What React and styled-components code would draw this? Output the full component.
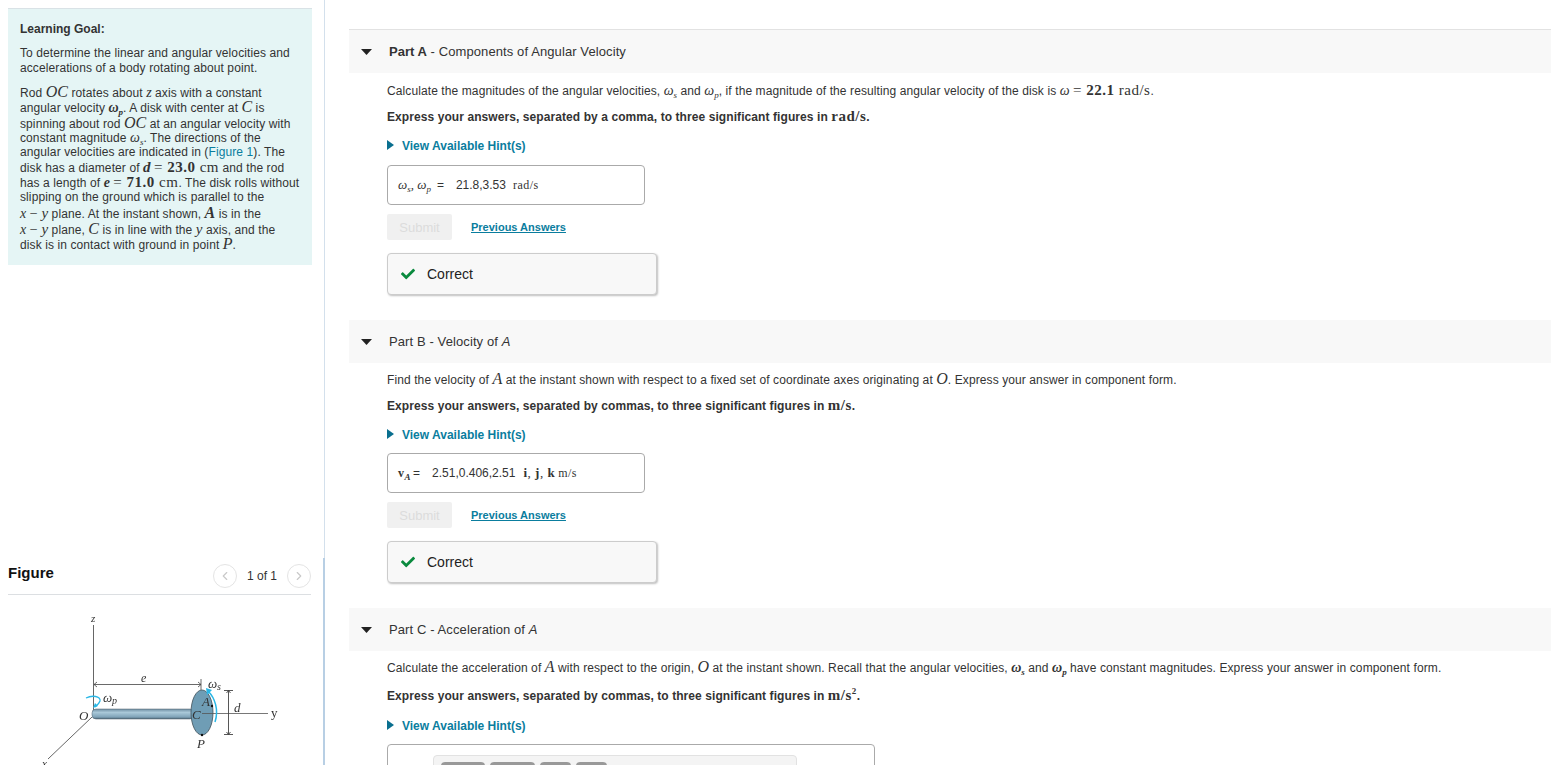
import React from 'react';
import styled, {createGlobalStyle} from 'styled-components';
import {FaCheck} from 'react-icons/fa';
import {ChevronLeft, ChevronRight} from 'lucide-react';

const Global = createGlobalStyle`
    html, body {
        margin: 0;
        padding: 0;
        height: 765px;
        overflow: hidden;
        background: #fff;
    }
    body {
        font-family: "Liberation Sans", Arial, sans-serif;
        font-size: 12px;
        color: #333;
    }
`
const Page = styled.div`
    display: flex;
    width: 1551px;
    height: 765px;
    overflow: hidden;
`
const Side = styled.aside`
    width: 325px;
    flex: none;
    display: flex;
    flex-direction: column;
`
const SideTop = styled.div`
    height: 558px;
    padding: 8px 12px 0 8px;
    border-right: 1px solid #d3e0ec;
    box-sizing: border-box;
`
const SideBottom = styled.div`
    flex: 1;
    padding: 0 12px 0 8px;
    border-right: 2px solid #b8cfe4;
    box-sizing: border-box;
    overflow: hidden;
`
const Goal = styled.section`
    background: #e5f5f5;
    border-top: 1px solid #d9e2e6;
    height: 257px;
    box-sizing: border-box;
    padding: 13px 12px 0;
    line-height: 15px;
    letter-spacing: 0.1px;
`
const GoalTitle = styled.div`
    font-weight: bold;
    letter-spacing: 0;
    margin-bottom: 9px;
`
const GoalPara = styled.div`
    margin-bottom: 8px;
`
const Line = styled.span`
    display: block;
    white-space: nowrap;
    height: ${p => p.$h || 15}px;
`
const Math = styled.span`
    font-family: "Liberation Serif", "DejaVu Serif", serif;
    font-style: ${p => p.$up ? 'normal' : 'italic'};
    font-weight: ${p => p.$bold ? 'bold' : 'normal'};
    font-size: ${p => p.$size || 16}px;
    letter-spacing: ${p => p.$up ? 0.5 : 0}px;
    color: #333;
`
const Sub = styled.sub`
    font-size: 9px;
    line-height: 0;
    vertical-align: -3px;
`
const Sup = styled.sup`
    font-size: 9px;
    line-height: 0;
    vertical-align: 6px;
`
const TextLink = styled.span`
    color: #0a7d9e;
`
const FigureHead = styled.div`
    display: flex;
    align-items: center;
    justify-content: space-between;
    height: 36px;
    border-bottom: 1px solid #dcdfe2;
`
const FigureTitle = styled.div`
    font-size: 15px;
    font-weight: bold;
    color: #111;
    margin-top: -7px;
`
const Pager = styled.div`
    display: flex;
    align-items: center;
    gap: 10px;
`
const PagerButton = styled.span`
    width: 24px;
    height: 24px;
    box-sizing: border-box;
    border: 1px solid #e4e4e4;
    border-radius: 50%;
    display: flex;
    align-items: center;
    justify-content: center;
    color: #c9c9c9;
`
const FigureDrawing = styled.svg`
    display: block;
    margin-left: -8px;
    filter: blur(0.35px);
`
const Main = styled.main`
    flex: 1;
    min-width: 0;
    padding: 29px 0 0 24px;
`
const Part = styled.section`
    height: ${p => p.$first ? 291 : 288}px;
`
const PartHead = styled.header`
    height: ${p => p.$first ? 44 : 43}px;
    background: #f8f8f8;
    display: flex;
    align-items: center;
    border-top: ${p => p.$first ? '1px solid #e2e2e2' : 'none'};
    box-sizing: border-box;
    padding-left: 12px;
    font-size: 13px;
`
const Caret = styled.svg`
    width: 11px;
    height: 6px;
    margin-right: 17px;
`
const PartName = styled.span`
    font-weight: ${p => p.$bold ? 'bold' : 'normal'};
    font-size: 13px;
    letter-spacing: ${p => p.$bold ? 0 : 0.1}px;
    white-space: pre;
`
const PartBody = styled.div`
    padding-left: 38px;
`
const Prompt = styled.p`
    margin: 0;
    height: 15px;
    line-height: 15px;
    padding-top: ${p => p.$top || 0}px;
    font-weight: ${p => p.$bold ? 'bold' : 'normal'};
    letter-spacing: ${p => p.$bold ? 0.08 : 0.1}px;
    white-space: nowrap;
`
const Hint = styled.div`
    display: flex;
    align-items: center;
    gap: 8px;
    height: 15px;
    margin-top: ${p => p.$top || 14}px;
    color: #0a7d9e;
    font-weight: bold;
`
const HintArrow = styled.svg`
    width: 7px;
    height: 10px;
    margin-top: -2px;
`
const AnswerBox = styled.div`
    width: 258px;
    height: 40px;
    margin-top: ${p => p.$top || 12}px;
    border: 1px solid #aaa;
    border-radius: 4px;
    box-sizing: border-box;
    display: flex;
    align-items: center;
    padding-left: 10px;
    font-size: 12px;
    white-space: pre;
`
const AnswerValue = styled.span`
    margin: 0 ${p => p.$after || 0}px 0 ${p => p.$before || 0}px;
`
const Actions = styled.div`
    display: flex;
    align-items: center;
    gap: 19px;
    margin-top: 9px;
`
const SubmitButton = styled.button`
    width: 65px;
    height: 26px;
    background: #f0f0f0;
    border: none;
    border-radius: 2px;
    color: #dcdcdc;
    font-family: inherit;
    font-size: 13px;
    padding: 0;
`
const AnswersLink = styled.span`
    color: #0a7d9e;
    font-weight: bold;
    font-size: 11px;
    text-decoration: underline;
`
const Correct = styled.div`
    width: 270px;
    height: 42px;
    margin-top: 13px;
    box-sizing: border-box;
    display: flex;
    align-items: center;
    gap: 12px;
    padding-left: 13px;
    background: #f8f8f8;
    border: 1px solid #ccc;
    border-radius: 4px;
    box-shadow: 1px 1px 2px rgba(0, 0, 0, 0.25);
    font-size: 14px;
    color: #222;
`
const EditorBox = styled.div`
    width: 488px;
    height: 60px;
    margin-top: 11px;
    box-sizing: border-box;
    border: 1px solid #aaa;
    border-radius: 4px;
    padding: 10px 0 0 45px;
`
const Toolbar = styled.div`
    width: 364px;
    height: 40px;
    box-sizing: border-box;
    background: #f4f4f4;
    border: 1px solid #e2e2e2;
    border-radius: 4px;
    display: flex;
    gap: 5px;
    padding: 6px 0 0 7px;
`
const ToolButton = styled.span`
    width: ${p => p.$w}px;
    height: 24px;
    background: #999;
    border-radius: 4px;
`

function Caption({x, y, size = 13, italic = true, children}) {
    return (
        <text x={x} y={y} fontFamily="Liberation Serif" fontStyle={italic ? 'italic' : 'normal'} fontSize={size} fill="#333">
            {children}
        </text>
    )
}

function Diagram() {
    return (
        <FigureDrawing width="300" height="170" viewBox="0 595 300 170">
            <defs>
                <linearGradient id="rod" x1="0" y1="0" x2="0" y2="1">
                    <stop offset="0" stopColor="#6f8fa3" />
                    <stop offset="0.35" stopColor="#a9c8d8" />
                    <stop offset="0.8" stopColor="#7fa3b8" />
                    <stop offset="1" stopColor="#4d6675" />
                </linearGradient>
            </defs>
            <path d="M93.5 625V714M92 717L48 759" stroke="#555" strokeWidth="0.9" fill="none" />
            <path d="M94 684.5H201M201 679V690M97 682L94 684.5L97 687M198 682L201 684.5L198 687" stroke="#444" strokeWidth="0.8" fill="none" />
            <rect x="92" y="709" width="102" height="10" rx="4" fill="url(#rod)" stroke="#4c5f6b" strokeWidth="0.5" />
            <ellipse cx="202" cy="712.5" rx="11" ry="22.5" fill="#6f9db5" stroke="#3f4f58" strokeWidth="0.8" />
            <path d="M202 713.5H268" stroke="#555" strokeWidth="0.8" fill="none" />
            <path d="M224 690.5H233M228.5 690.5V734M224 734.5H233M226.5 693L228.5 690.5L230.5 693M226.5 732L228.5 734.5L230.5 732" stroke="#444" strokeWidth="0.9" fill="none" />
            <path d="M208 691C215 698 219 710 215 722" stroke="#29b7e6" strokeWidth="1.5" fill="none" />
            <path d="M206 688L212 690L207 695Z" fill="#29b7e6" />
            <path d="M86 698C92 695 101 696 100 701C99 704 96 706 95 707" stroke="#29b7e6" strokeWidth="1.3" fill="none" />
            <path d="M93 708L95 703L98 706Z" fill="#29b7e6" />
            <circle cx="212" cy="706" r="1.2" fill="#111" />
            <circle cx="202" cy="735" r="1.2" fill="#111" />
            <Caption x={91} y={622} size={11}>z</Caption>
            <Caption x={141} y={682} size={12}>e</Caption>
            <Caption x={103} y={702} size={13}>ω</Caption>
            <Caption x={112} y={704} size={10}>p</Caption>
            <Caption x={208} y={688} size={13}>ω</Caption>
            <Caption x={217} y={690} size={10}>s</Caption>
            <Caption x={79} y={720}>O</Caption>
            <Caption x={192} y={719}>C</Caption>
            <Caption x={202} y={706}>A</Caption>
            <Caption x={197} y={748}>P</Caption>
            <Caption x={234} y={712}>d</Caption>
            <Caption x={271} y={717} size={13} italic={false}>y</Caption>
            <Caption x={42} y={767} size={11}>x</Caption>
        </FigureDrawing>
    )
}

function PartSection({first, label, title, children}) {
    return (
        <Part $first={first}>
            <PartHead $first={first}>
                <Caret viewBox="0 0 11 6"><polygon points="0,0 11,0 5.5,6" fill="#222" /></Caret>
                <PartName $bold={first}>{label}</PartName>
                <PartName> - {title}</PartName>
            </PartHead>
            <PartBody>{children}</PartBody>
        </Part>
    )
}

function HintRow({top}) {
    return (
        <Hint $top={top}>
            <HintArrow viewBox="0 0 7 10"><polygon points="0,0 7,5 0,10" fill="#0a6f8f" /></HintArrow>
            View Available Hint(s)
        </Hint>
    )
}

function Result() {
    return (
        <>
            <Actions>
                <SubmitButton disabled>Submit</SubmitButton>
                <AnswersLink>Previous Answers</AnswersLink>
            </Actions>
            <Correct>
                <FaCheck size={14} color="#0a8a3e" />
                Correct
            </Correct>
        </>
    )
}

export default function App() {
    return (
        <>
            <Global />
            <Page>
                <Side>
                    <SideTop>
                        <Goal>
                            <GoalTitle>Learning Goal:</GoalTitle>
                            <GoalPara>
                                <Line>To determine the linear and angular velocities and</Line>
                                <Line>accelerations of a body rotating about point.</Line>
                            </GoalPara>
                            <Line>Rod <Math>OC</Math> rotates about <Math $size={14}>z</Math> axis with a constant</Line>
                            <Line $h={16}>angular velocity <Math $bold $size={14}>ω<Sub>p</Sub></Math>. A disk with center at <Math>C</Math> is</Line>
                            <Line>spinning about rod <Math>OC</Math> at an angular velocity with</Line>
                            <Line>constant magnitude <Math $size={14}>ω<Sub>s</Sub></Math>. The directions of the</Line>
                            <Line>angular velocities are indicated in (<TextLink>Figure 1</TextLink>). The</Line>
                            <Line>disk has a diameter of <Math $bold $size={15}>d</Math> <Math $up $size={15}>= <b>23.0</b> cm</Math> and the rod</Line>
                            <Line>has a length of <Math $bold $size={14}>e</Math> <Math $up $size={15}>= <b>71.0</b> cm</Math>. The disk rolls without</Line>
                            <Line>slipping on the ground which is parallel to the</Line>
                            <Line $h={16}><Math $size={14}>x</Math> <Math $up $size={14}>−</Math> <Math $size={15}>y</Math> plane. At the instant shown, <Math $bold>A</Math> is in the</Line>
                            <Line><Math $size={14}>x</Math> <Math $up $size={14}>−</Math> <Math $size={15}>y</Math> plane, <Math>C</Math> is in line with the <Math $size={15}>y</Math> axis, and the</Line>
                            <Line>disk is in contact with ground in point <Math>P</Math>.</Line>
                        </Goal>
                    </SideTop>
                    <SideBottom>
                        <FigureHead>
                            <FigureTitle>Figure</FigureTitle>
                            <Pager>
                                <PagerButton><ChevronLeft size={14} /></PagerButton>
                                1 of 1
                                <PagerButton><ChevronRight size={14} /></PagerButton>
                            </Pager>
                        </FigureHead>
                        <Diagram />
                    </SideBottom>
                </Side>
                <Main>
                    <PartSection first label="Part A" title="Components of Angular Velocity">
                        <Prompt $top={10}>
                            Calculate the magnitudes of the angular velocities, <Math $size={14}>ω<Sub>s</Sub></Math> and <Math $size={14}>ω<Sub>p</Sub></Math>, if the magnitude of the resulting angular velocity of the disk is <Math $size={14}>ω</Math> <Math $up $size={15}>= <b>22.1</b> rad/s</Math>.
                        </Prompt>
                        <Prompt $top={11} $bold>
                            Express your answers, separated by a comma, to three significant figures in <Math $up $bold $size={15}>rad/s</Math>.
                        </Prompt>
                        <HintRow />
                        <AnswerBox>
                            <Math $size={13}>ω<Sub>s</Sub>, ω<Sub>p</Sub></Math>
                            <AnswerValue $before={6}>=</AnswerValue>
                            <AnswerValue $before={12} $after={7}>21.8,3.53</AnswerValue>
                            <Math $up $size={12}>rad/s</Math>
                        </AnswerBox>
                        <Result />
                    </PartSection>
                    <PartSection label="Part B" title={<>Velocity of <i>A</i></>}>
                        <Prompt $top={8}>
                            Find the velocity of <Math>A</Math> at the instant shown with respect to a fixed set of coordinate axes originating at <Math>O</Math>. Express your answer in component form.
                        </Prompt>
                        <Prompt $top={12} $bold>
                            Express your answers, separated by commas, to three significant figures in <Math $up $bold $size={15}>m/s</Math>.
                        </Prompt>
                        <HintRow />
                        <AnswerBox $top={11}>
                            <Math $up $bold $size={12}>v<Sub><i>A</i></Sub></Math>
                            <AnswerValue $before={2}>=</AnswerValue>
                            <AnswerValue $before={12} $after={8}>2.51,0.406,2.51</AnswerValue>
                            <AnswerValue $after={3}>
                                <Math $up $bold $size={13}>i</Math><Math $up $size={13}>, </Math><Math $up $bold $size={13}>j</Math><Math $up $size={13}>, </Math><Math $up $bold $size={13}>k</Math>
                            </AnswerValue>
                            <Math $up $size={12}>m/s</Math>
                        </AnswerBox>
                        <Result />
                    </PartSection>
                    <PartSection label="Part C" title={<>Acceleration of <i>A</i></>}>
                        <Prompt $top={8}>
                            Calculate the acceleration of <Math>A</Math> with respect to the origin, <Math>O</Math> at the instant shown. Recall that the angular velocities, <Math $bold $size={14}>ω<Sub>s</Sub></Math> and <Math $bold $size={14}>ω<Sub>p</Sub></Math> have constant magnitudes. Express your answer in component form.
                        </Prompt>
                        <Prompt $top={14} $bold>
                            Express your answers, separated by commas, to three significant figures in <Math $up $bold $size={15}>m/s<Sup>2</Sup></Math>.
                        </Prompt>
                        <HintRow top={15} />
                        <EditorBox>
                            <Toolbar>
                                <ToolButton $w={44} />
                                <ToolButton $w={45} />
                                <ToolButton $w={31} />
                                <ToolButton $w={31} />
                            </Toolbar>
                        </EditorBox>
                    </PartSection>
                </Main>
            </Page>
        </>
    )
}
